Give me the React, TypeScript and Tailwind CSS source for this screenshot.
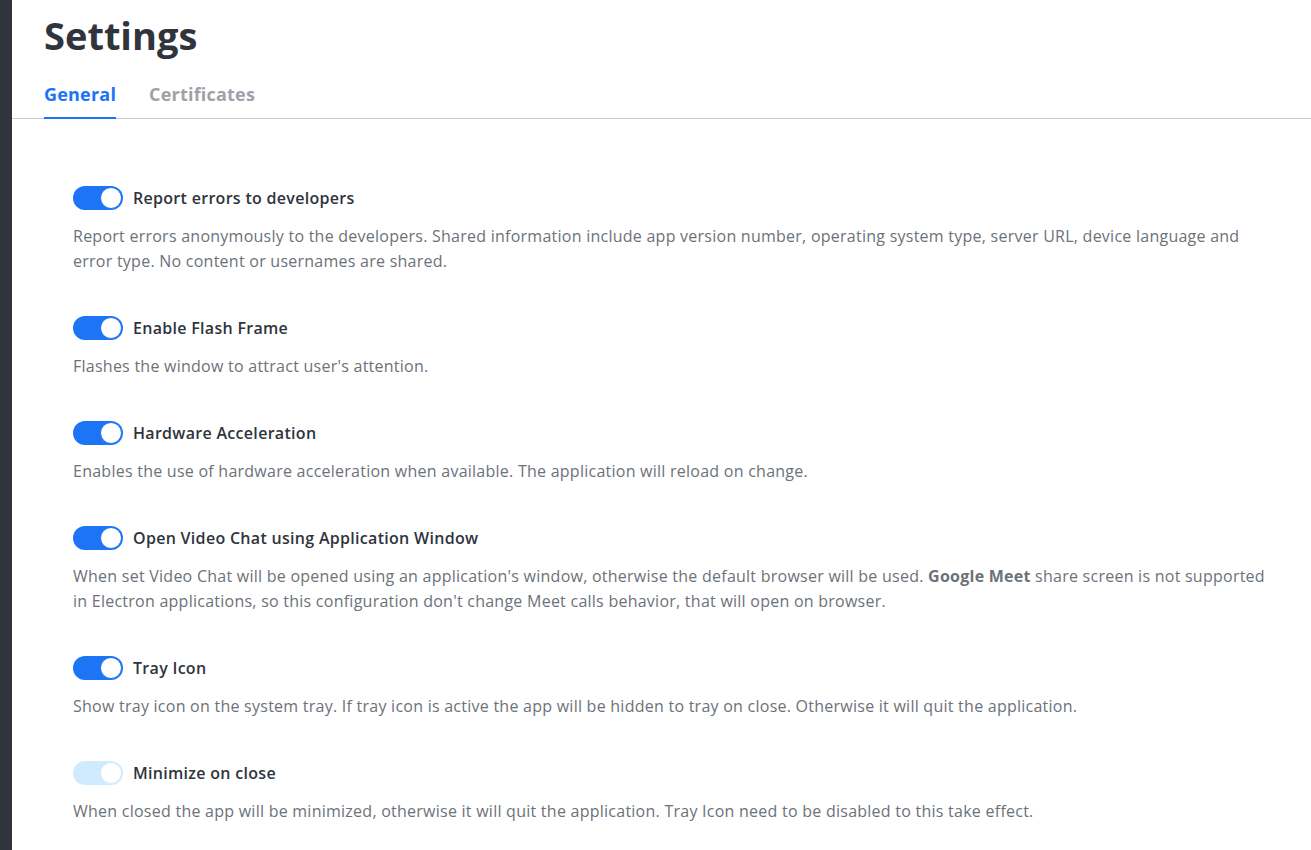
import React from "react";

type Item = {
    title: string;
    desc: React.ReactNode;
    on: boolean;
    disabled?: boolean;
};

const items: Item[] = [
    {
        title: "Report errors to developers",
        desc: "Report errors anonymously to the developers. Shared information include app version number, operating system type, server URL, device language and error type. No content or usernames are shared.",
        on: true,
    },
    {
        title: "Enable Flash Frame",
        desc: "Flashes the window to attract user's attention.",
        on: true,
    },
    {
        title: "Hardware Acceleration",
        desc: "Enables the use of hardware acceleration when available. The application will reload on change.",
        on: true,
    },
    {
        title: "Open Video Chat using Application Window",
        desc: (
            <>
                When set Video Chat will be opened using an application's window, otherwise the default browser will be used.{" "}
                <strong className="font-bold">Google Meet</strong> share screen is not supported in Electron applications, so this
                configuration don't change Meet calls behavior, that will open on browser.
            </>
        ),
        on: true,
    },
    {
        title: "Tray Icon",
        desc: "Show tray icon on the system tray. If tray icon is active the app will be hidden to tray on close. Otherwise it will quit the application.",
        on: true,
    },
    {
        title: "Minimize on close",
        desc: "When closed the app will be minimized, otherwise it will quit the application. Tray Icon need to be disabled to this take effect.",
        on: true,
        disabled: true,
    },
];

function Toggle({ on, disabled }: { on: boolean; disabled?: boolean }) {
    return (
        <span
            className={`relative inline-flex h-6 w-[50px] shrink-0 items-center rounded-full ${
                disabled ? "bg-[#d1ebfe]" : on ? "bg-[#1d74f5]" : "bg-[#9ea2a8]"
            }`}
        >
            <span
                className={`absolute top-px h-[22px] w-[22px] rounded-full bg-white border ${
                    disabled ? "border-[#d1ebfe]" : "border-[#1d74f5]"
                } ${on ? "right-px" : "left-px"}`}
            />
        </span>
    );
}

export default function App() {
    return (
        <div className="flex min-h-[850px] bg-white font-['Open_Sans',sans-serif] overflow-hidden">
            <div className="w-3 shrink-0 bg-[#2f343d]" />

            <div className="flex-1 min-w-0">
                <header className="pl-8 pt-[11px]">
                    <h1 className="text-[38px] leading-[48px] font-bold text-[#2f343d]">Settings</h1>
                </header>

                <nav className="mt-[23px] flex gap-[33px] border-b border-[#cbced1] pl-8">
                    <button className="-mb-px border-b-2 border-[#1d74f5] pb-[11px] text-[18px] leading-6 font-bold tracking-[0.2px] text-[#1d74f5]">
                        General
                    </button>
                    <button className="-mb-px border-b-2 border-transparent pb-[11px] text-[18px] leading-6 font-bold tracking-[0.2px] text-[#9ea2a8]">
                        Certificates
                    </button>
                </nav>

                <div className="flex flex-col gap-[42px] pl-[61px] pr-8 pt-[67px]">
                    {items.map((item) => (
                        <div key={item.title}>
                            <label className="flex items-center gap-[10px]">
                                <Toggle on={item.on} disabled={item.disabled} />
                                <span className="text-base leading-6 font-semibold tracking-[0.3px] text-[#2f343d]">
                                    {item.title}
                                </span>
                            </label>
                            <p className="mt-[14px] text-base leading-[25px] tracking-[0.25px] text-[#6c727a]">{item.desc}</p>
                        </div>
                    ))}
                </div>
            </div>
        </div>
    );
}
